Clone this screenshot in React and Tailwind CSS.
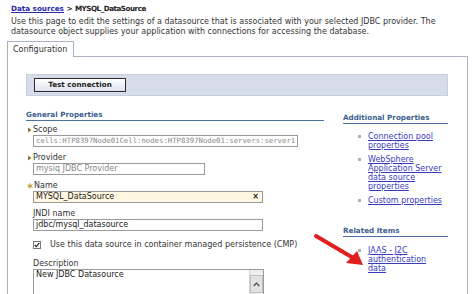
import React from "react";

function Tri() {
  return (
    <svg width="5" height="6" viewBox="0 0 5 6" className="shrink-0">
      <path d="M1 0.5 L4.5 3 L1 5.5 Z" fill="#8a7a30" />
    </svg>
  );
}

function Star() {
  return (
    <svg width="6" height="6" viewBox="0 0 6 6" className="shrink-0">
      <path d="M3 0.3 L3 5.7 M0.5 1.7 L5.5 4.3 M5.5 1.7 L0.5 4.3" stroke="#b8962a" strokeWidth="1" />
    </svg>
  );
}

function Bullet() {
  return <span className="mt-[3px] w-[3px] h-[3px] bg-[#b0b0b0] shrink-0" />;
}

function LinkItem({ children }) {
  return (
    <div className="flex gap-[7px] pl-[15px]">
      <Bullet />
      <a className="w-[81px] text-[#3a3ac0] underline leading-[9px]">{children}</a>
    </div>
  );
}

export default function App() {
  return (
    <div className="relative w-[474px] h-[294px] overflow-hidden bg-white text-[#333] font-['DejaVu_Sans',sans-serif] text-[8px] flex flex-col">
      <div className="pl-[11px] pt-[4px] leading-[10px] font-bold text-[#222] text-[7.2px]">
        <a className="text-[#2a2aa8] underline">Data sources</a> &gt; <span className="tracking-[-0.5px]">MYSQL_DataSource</span>
      </div>
      <div className="pl-[11px] mt-[3px] leading-[10px] w-[460px] whitespace-nowrap">
        Use this page to edit the settings of a datasource that is associated with your selected JDBC provider. The
        <br />
        datasource object supplies your application with connections for accessing the database.
      </div>
      <div className="relative z-10 ml-[7px] mt-[4px] -mb-px w-[67px] h-[16px] border border-b-0 border-[#a9b1c2] bg-white pl-[5px] leading-[15px]">
        Configuration
      </div>
      <div className="ml-[7px] w-[461px] flex-1 border border-b-0 border-[#a9b1c2] pt-[17px]">
        <div className="ml-[18px] w-[422px] h-[22px] bg-[#d6dce9] border border-[#c8cfdc] flex items-center pl-[7px]">
          <div className="w-[92px] h-[14px] border border-[#2a2a2a] bg-gradient-to-b from-white to-[#dfe3ee] font-bold text-center leading-[12px] text-[#222] text-[7.2px]">
            Test connection
          </div>
        </div>
        <div className="flex ml-[18px] mt-[14px]">
          <div className="w-[298px]">
            <div className="font-bold text-[#3b5f8e] leading-[10px] border-b border-[#4e72a0] text-[7.2px]">General Properties</div>
            <div className="mt-[4px] pl-[7px]">
              <div className="flex items-center -ml-[6px] gap-[1px] leading-[10px]"><Tri />Scope</div>
              <div className="w-[265px] h-[12px] border border-[#9a9a9a] text-[#888] pl-[2px] leading-[10px] whitespace-nowrap overflow-hidden font-['DejaVu_Sans_Mono',monospace] text-[7.3px]">
                cells:HTP8397Node01Cell:nodes:HTP8397Node01:servers:server1
              </div>
              <div className="mt-[6px] flex items-center -ml-[6px] gap-[1px] leading-[10px]"><Tri />Provider</div>
              <div className="w-[172px] h-[12px] border border-[#9a9a9a] text-[#888] pl-[2px] leading-[10px]">mysiq JDBC Provider</div>
              <div className="mt-[6px] flex items-center -ml-[6px] gap-[1px] leading-[10px]"><Star />Name</div>
              <div className="w-[230px] h-[12px] border border-[#9a9a9a] bg-[#fff7e0] pl-[2px] pr-[3px] leading-[10px] flex justify-between text-[#222]">
                <span>MYSQL_DataSource</span>
                <span className="font-bold">×</span>
              </div>
              <div className="mt-[6px] leading-[10px]">JNDI name</div>
              <div className="w-[230px] h-[12px] border border-[#9a9a9a] pl-[2px] leading-[10px] text-[#222]">jdbc/mysql_datasource</div>
              <div className="mt-[9px] flex items-center gap-[9px] leading-[10px] whitespace-nowrap">
                <svg width="8" height="8" viewBox="0 0 8 8" className="shrink-0">
                  <rect x="0.5" y="0.5" width="7" height="7" fill="white" stroke="#777" />
                  <path d="M1.8 4 L3.3 5.6 L6.3 1.8" stroke="#222" strokeWidth="1.2" fill="none" />
                </svg>
                <span>Use this data source in container managed persistence (CMP)</span>
              </div>
              <div className="mt-[9px] leading-[10px]">Description</div>
              <div className="w-[231px] h-[40px] border border-[#9a9a9a] flex text-[#222]">
                <div className="flex-1 pl-[2px] leading-[10px]">New JDBC Datasource</div>
                <div className="w-[14px] bg-[#eeeeee] border-l border-[#d0d0d0] flex flex-col">
                  <div className="h-[5px]" />
                  <div className="h-[18px] bg-[#e2e2e2] border border-[#c0c0c0] flex items-center justify-center">
                    <svg width="7" height="5" viewBox="0 0 7 5"><path d="M0.8 4 L3.5 1.2 L6.2 4" stroke="#444" strokeWidth="1.2" fill="none" /></svg>
                  </div>
                </div>
              </div>
            </div>
          </div>
          <div className="ml-[19px] w-[105px] pt-[3px]">
            <div className="font-bold text-[#3b5f8e] leading-[10px] border-b border-[#4e72a0] text-[7.2px]">Additional Properties</div>
            <div className="mt-[8px] flex flex-col gap-[5px]">
              <LinkItem>Connection pool properties</LinkItem>
              <LinkItem>WebSphere Application Server data source properties</LinkItem>
              <LinkItem>Custom properties</LinkItem>
            </div>
            <div className="mt-[21px] font-bold text-[#3b5f8e] leading-[10px] border-b border-[#4e72a0] text-[7.2px]">Related Items</div>
            <div className="mt-[9px] flex flex-col">
              <LinkItem>JAAS - J2C authentication<br />data</LinkItem>
            </div>
          </div>
        </div>
      </div>
      <svg className="absolute left-[310px] top-[230px]" width="60" height="40" viewBox="0 0 60 40">
        <path d="M6 6 L45 29" stroke="#e0201e" strokeWidth="4" strokeLinecap="round" />
        <path d="M53 35 L36 33 L47 21 Z" fill="#e0201e" />
      </svg>
    </div>
  );
}
